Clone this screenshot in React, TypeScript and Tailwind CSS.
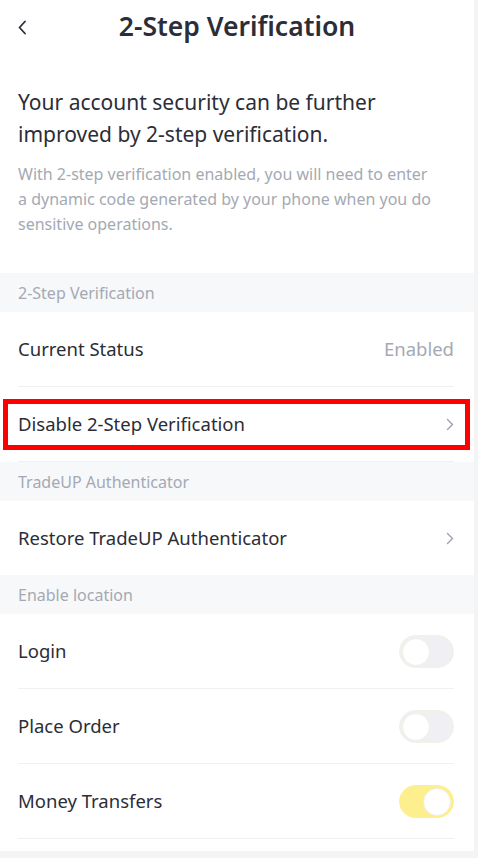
import React from 'react';

const font = { fontFamily: '"Noto Sans", "Open Sans", sans-serif' };

const SectionTitle = ({ title }: { title: string }) => (
  <div className="h-[39px] bg-[#f7f8fa] px-[18px] flex items-center text-[16px] text-[#a4a9b3]">{title}</div>
);

const Chevron = () => (
  <svg width="8" height="13" viewBox="0 0 8 13" fill="none">
    <path d="M1.5 1.5l5 5-5 5" stroke="#9ca1ab" strokeWidth="1.4" strokeLinecap="round" strokeLinejoin="round" />
  </svg>
);

const Toggle = ({ on }: { on?: boolean }) => (
  <div
    className={
      'w-[55px] h-[33px] rounded-full p-[2px] flex border ' +
      (on ? 'bg-[#fdef8e] border-[#fdef8e] justify-end' : 'bg-[#efeff4] border-[#f3f1e4] justify-start')
    }
  >
    <div className="w-[28px] h-[28px] rounded-full bg-white border border-[#f1efe6]" />
  </div>
);

const Row = ({ label, children, divider = true }: { label: string; children?: React.ReactNode; divider?: boolean }) => (
  <div className="pl-[18px] pr-[20px]">
    <div className={'flex items-center justify-between ' + (divider ? 'h-[75px] border-b border-[#f0f0f2]' : 'h-[74px]')}>
      <span className="text-[18.5px] text-[#2b2d38]">{label}</span>
      {children}
    </div>
  </div>
);

export default function App() {
  return (
    <div className="w-[478px] h-[858px] bg-[#f4f4f5] overflow-hidden" style={font}>
      <div className="w-[474px] h-[851px] bg-white">
        <div className="h-14 relative flex items-center justify-center">
          <svg className="absolute left-[17px] top-[20px]" width="11" height="15" viewBox="0 0 11 15" fill="none">
            <path d="M8 1.5L2.5 7.5 8 13.5" stroke="#2b2d38" strokeWidth="1.8" strokeLinecap="round" strokeLinejoin="round" />
          </svg>
          <h1 className="text-[26.5px] font-semibold text-[#2b2d38] -mt-[2px]">2-Step Verification</h1>
        </div>

        <div className="px-[18px] pt-[30px] pb-[37px]">
          <p className="text-[21px] leading-[32px] text-[#2b2d38]">
            Your account security can be further improved by 2-step verification.
          </p>
          <p className="mt-[12px] max-w-[418px] text-[16px] leading-[25px] text-[#a4a9b3] -mb-[1px]">
            With 2-step verification enabled, you will need to enter a dynamic code generated by your phone when you do sensitive operations.
          </p>
        </div>

        <SectionTitle title="2-Step Verification" />
        <Row label="Current Status">
          <span className="text-[18.5px] text-[#a4a9b3]">Enabled</span>
        </Row>
        <div className="relative">
          <Row label="Disable 2-Step Verification">
            <Chevron />
          </Row>
          <div className="absolute left-[3px] right-[4px] top-[12px] h-[51px] border-[5px] border-[#ff0000]" />
        </div>

        <SectionTitle title="TradeUP Authenticator" />
        <Row label="Restore TradeUP Authenticator" divider={false}>
          <Chevron />
        </Row>

        <SectionTitle title="Enable location" />
        <Row label="Login">
          <Toggle />
        </Row>
        <Row label="Place Order">
          <Toggle />
        </Row>
        <Row label="Money Transfers">
          <Toggle on />
        </Row>
      </div>
    </div>
  );
}
